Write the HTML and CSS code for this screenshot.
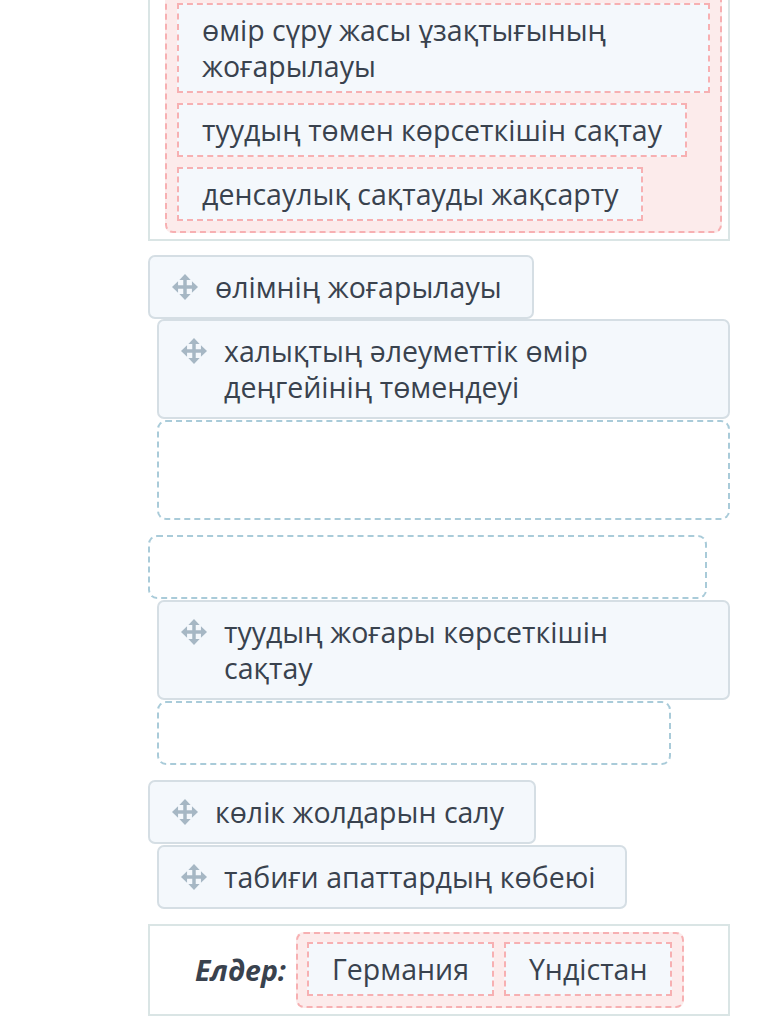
FILE: index.html
```html
<!DOCTYPE html>
<html lang="kk">
<head>
<meta charset="utf-8">
<title>Сұрыптау</title>
<link rel="stylesheet" href="styles.css">
</head>
<body>
<main class="page">
  <section class="category category-top">
    <div class="dropzone">
      <div class="placed wide">өмір сүру жасы ұзақтығының жоғарылауы</div>
      <div class="placed">туудың төмен көрсеткішін сақтау</div>
      <div class="placed">денсаулық сақтауды жақсарту</div>
    </div>
  </section>

  <div class="pool">
    <div class="card gap-top">
      <svg class="move" viewBox="0 0 24 24"><path d="M12 4v16M4 12h16" /><polygon points="12,0 6.8,5.6 17.2,5.6" /><polygon points="12,24 6.8,18.4 17.2,18.4" /><polygon points="0,12 5.6,6.8 5.6,17.2" /><polygon points="24,12 18.4,6.8 18.4,17.2" /></svg>
      <span class="label">өлімнің жоғарылауы</span>
    </div>
    <div class="card indent">
      <svg class="move" viewBox="0 0 24 24"><path d="M12 4v16M4 12h16" /><polygon points="12,0 6.8,5.6 17.2,5.6" /><polygon points="12,24 6.8,18.4 17.2,18.4" /><polygon points="0,12 5.6,6.8 5.6,17.2" /><polygon points="24,12 18.4,6.8 18.4,17.2" /></svg>
      <span class="label">халықтың әлеуметтік өмір деңгейінің төмендеуі</span>
    </div>
    <div class="slot indent gap-1 slot-tall"></div>
    <div class="slot gap-big slot-w559"></div>
    <div class="card indent gap-1">
      <svg class="move" viewBox="0 0 24 24"><path d="M12 4v16M4 12h16" /><polygon points="12,0 6.8,5.6 17.2,5.6" /><polygon points="12,24 6.8,18.4 17.2,18.4" /><polygon points="0,12 5.6,6.8 5.6,17.2" /><polygon points="24,12 18.4,6.8 18.4,17.2" /></svg>
      <span class="label">туудың жоғары көрсеткішін сақтау</span>
    </div>
    <div class="slot indent gap-1 slot-w514"></div>
    <div class="card gap-big">
      <svg class="move" viewBox="0 0 24 24"><path d="M12 4v16M4 12h16" /><polygon points="12,0 6.8,5.6 17.2,5.6" /><polygon points="12,24 6.8,18.4 17.2,18.4" /><polygon points="0,12 5.6,6.8 5.6,17.2" /><polygon points="24,12 18.4,6.8 18.4,17.2" /></svg>
      <span class="label">көлік жолдарын салу</span>
    </div>
    <div class="card indent gap-1">
      <svg class="move" viewBox="0 0 24 24"><path d="M12 4v16M4 12h16" /><polygon points="12,0 6.8,5.6 17.2,5.6" /><polygon points="12,24 6.8,18.4 17.2,18.4" /><polygon points="0,12 5.6,6.8 5.6,17.2" /><polygon points="24,12 18.4,6.8 18.4,17.2" /></svg>
      <span class="label">табиғи апаттардың көбеюі</span>
    </div>
  </div>

  <section class="category category-bottom">
    <h2 class="cat-title">Елдер:</h2>
    <div class="dropzone dropzone-row">
      <div class="placed">Германия</div>
      <div class="placed">Үндістан</div>
    </div>
  </section>
</main>
</body>
</html>
```

FILE: styles.css
```css
* { box-sizing: border-box; }

html, body {
  margin: 0;
  padding: 0;
  background: #ffffff;
}

body {
  font-family: "Open Sans", "Noto Sans", sans-serif;
  font-size: 28.5px;
  line-height: 36px;
  color: #39424e;
  overflow: hidden;
}

.page {
  width: 582px;
  margin: -16px 0 0 148px;
  display: flex;
  flex-direction: column;
}

.category {
  border: 2px solid #dae5e5;
  background: #ffffff;
}

.category-top {
  padding: 6px 6px 6px 15px;
}

.dropzone {
  background: #fcebeb;
  border: 2px dashed #f7b0b2;
  border-radius: 8px;
  padding: 9px 10px 10px 10px;
  display: flex;
  flex-direction: column;
  align-items: flex-start;
  gap: 10px;
}

.placed {
  background: #f4f8fc;
  border: 2px dashed #f7b0b2;
  padding: 7px 23px;
  max-width: 100%;
}

.placed.wide {
  align-self: stretch;
}

.pool {
  display: flex;
  flex-direction: column;
  align-items: flex-start;
}

.card {
  display: flex;
  align-items: flex-start;
  background: #f4f8fc;
  border: 2px solid #d5dee4;
  border-radius: 7px;
  padding: 12px 30px 12px 20px;
  max-width: 100%;
}

.card.indent {
  max-width: calc(100% - 9px);
}

.indent {
  margin-left: 9px;
}

.gap-top {
  margin-top: 14px;
}

.gap-big {
  margin-top: 15px;
}

.gap-1 {
  margin-top: 1px;
}

.move {
  flex: none;
  width: 26px;
  height: 26px;
  margin: 5px 17px 0 2px;
  fill: #a6b7c4;
  stroke: none;
}

.move path {
  stroke: #a6b7c4;
  stroke-width: 3.2;
  fill: none;
}

.label {
  display: block;
}

.slot {
  border: 2px dashed #a9cbd9;
  border-radius: 9px;
  height: 64px;
}

.slot-tall {
  height: 100px;
  width: calc(100% - 9px);
}

.slot-w559 {
  width: 559px;
}

.slot-w514 {
  width: 514px;
}

.category-bottom {
  margin-top: 15px;
  padding: 6px 43px 6px 0;
  display: flex;
  align-items: center;
  gap: 10px;
}

.cat-title {
  margin: 0;
  width: 136px;
  flex: none;
  text-align: right;
  font-size: 28.5px;
  line-height: 36px;
  font-weight: 700;
  font-style: italic;
  color: #39424e;
}

.dropzone-row {
  flex-direction: row;
  padding: 8px 10px 10px 9px;
}
```
